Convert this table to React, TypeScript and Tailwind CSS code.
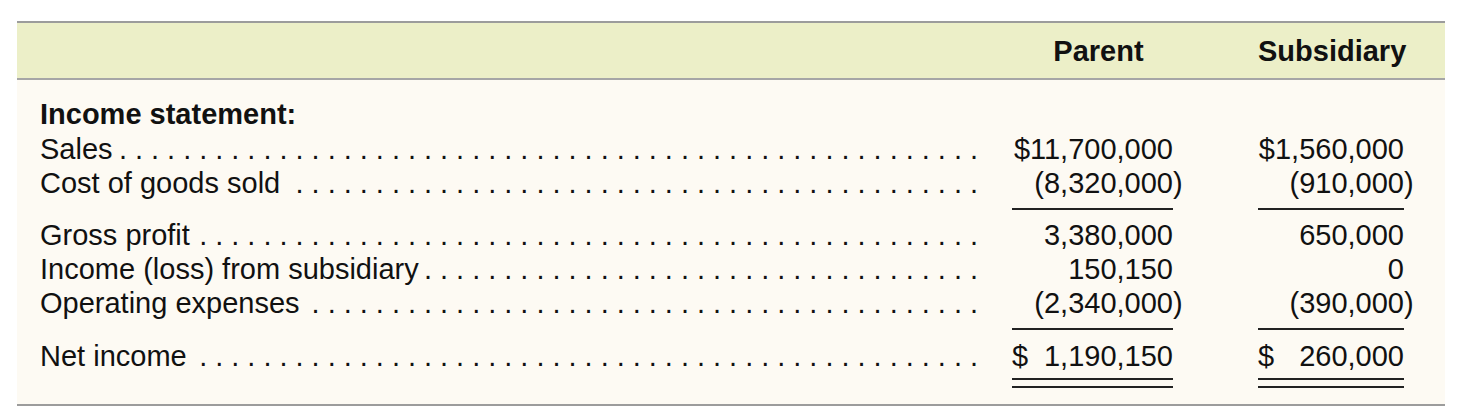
import React from 'react';

type Row = {
  label: string;
  parent: string;
  sub: string;
  neg?: boolean;
  dollar?: boolean;
};

const DOTS = '.'.repeat(70);

const Amount = ({ value, neg, dollar }: { value: string; neg?: boolean; dollar?: boolean }) => {
  if (dollar) {
    return (
      <div className="flex justify-between">
        <span>$</span>
        <span>{value}</span>
      </div>
    );
  }
  return (
    <div className="text-right">
      {neg ? '(' : ''}
      {value}
      {neg ? <span className="inline-block w-0">)</span> : null}
    </div>
  );
};

const Line = ({ label, parent, sub, neg, dollar }: Row) => (
  <div className="flex h-[34px] items-center">
    <div className="flex flex-1 min-w-0 pr-[26px]">
      <span className="whitespace-nowrap">{label}</span>
      <div className="ml-[6px] flex flex-1 min-w-0 justify-end overflow-hidden whitespace-nowrap">
        <span className="tracking-[8px]">{DOTS}</span>
      </div>
    </div>
    <div className="w-[161px]">
      <Amount value={parent} neg={neg} dollar={dollar} />
    </div>
    <div className="w-[85px]" />
    <div className="w-[146px]">
      <Amount value={sub} neg={neg} dollar={dollar} />
    </div>
  </div>
);

const Rule = ({ h, top, double }: { h: string; top: string; double?: boolean }) => (
  <div className={`flex ${h}`}>
    <div className="flex-1" />
    <div className="w-[161px]">
      <div className={`${top} h-[1.5px] bg-[#222]`} />
      {double && <div className="mt-[6.5px] h-[1.5px] bg-[#222]" />}
    </div>
    <div className="w-[85px]" />
    <div className="w-[146px]">
      <div className={`${top} h-[1.5px] bg-[#222]`} />
      {double && <div className="mt-[6.5px] h-[1.5px] bg-[#222]" />}
    </div>
  </div>
);

export default function App() {
  return (
    <div className="min-h-screen bg-white pt-[21px] font-['Liberation_Sans',Arial,sans-serif] text-[29px] text-[#111]">
      <div className="ml-[17px] w-[1428px] border-y-2 border-[#9c9c9c]">
        {/* Header */}
        <div className="flex h-[57px] items-center border-b-2 border-[#a6a6a6] bg-[#ecefc8] pl-[23px] pr-[41px] pt-[3px] font-bold">
          <div className="flex-1" />
          <div className="w-[161px] pl-[12px] text-center">Parent</div>
          <div className="w-[85px]" />
          <div className="w-[146px] pr-[6px] text-center">Subsidiary</div>
        </div>

        {/* Body */}
        <div className="bg-[#fdfaf3] pb-[14px] pl-[23px] pr-[41px] pt-[17px]">
          <div className="flex h-[36px] items-center font-bold">Income statement:</div>
          <Line label="Sales" parent="$11,700,000" sub="$1,560,000" />
          <Line label="Cost of goods sold" parent="8,320,000" sub="910,000" neg />
          <Rule h="h-[18px]" top="mt-[7px]" />
          <Line label="Gross profit" parent="3,380,000" sub="650,000" />
          <Line label="Income (loss) from subsidiary" parent="150,150" sub="0" />
          <Line label="Operating expenses" parent="2,340,000" sub="390,000" neg />
          <Rule h="h-[19px]" top="mt-[7px]" />
          <Line label="Net income" parent="1,190,150" sub="260,000" dollar />
          <Rule h="h-[16px]" top="mt-[4px]" double />
        </div>
      </div>
    </div>
  );
}
